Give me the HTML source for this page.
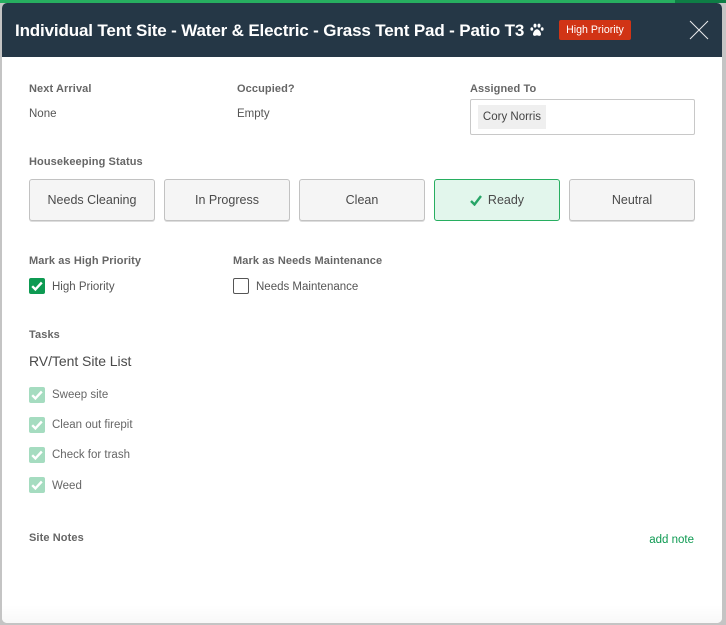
<!DOCTYPE html>
<html>
<head>
<meta charset="utf-8">
<style>
html,body{margin:0;padding:0;width:726px;height:625px;overflow:hidden;background:#c4c4c4;font-family:"Liberation Sans",sans-serif;}
.a{position:absolute;white-space:nowrap;}
#bar{left:0;top:0;width:675px;height:3px;background:#27ae60;}
#bar2{left:675px;top:0;width:51px;height:3px;background:#0e7d45;}
#modal{left:2px;top:3px;width:720px;height:620px;background:#fff;border-radius:5px;overflow:hidden;}
#grad{left:2px;top:605px;width:720px;height:18px;background:linear-gradient(#fff,#f8f8f8);border-radius:0 0 5px 5px;}
#head{left:2px;top:3px;width:720px;height:54px;background:#253746;border-radius:5px 5px 0 0;}
.title{left:15px;top:21px;font-size:17px;line-height:20px;font-weight:bold;color:#fff;letter-spacing:-.15px;}
.badge{left:559px;top:20px;width:72px;height:20px;background:#d13415;border-radius:2px;color:#fff;font-size:10.6px;line-height:20px;text-align:center;}
.lab{font-size:11px;line-height:14px;font-weight:bold;color:#666;letter-spacing:.1px;}
.val{font-size:11.5px;line-height:14px;color:#555;}
.input{left:470px;top:99px;width:223px;height:34px;border:1px solid #c8c8c8;border-radius:2px;background:#fff;}
.chip{left:478px;top:105px;width:68px;height:24px;background:#efefef;color:#444;font-size:11.5px;line-height:24px;text-align:center;}
.btn{top:179px;width:124px;height:40px;border:1px solid #c2c2c2;border-radius:3px;background:#f5f5f5;color:#4a4a4a;font-size:12.5px;line-height:40px;text-align:center;box-shadow:0 1px 0 #ddd;}
.sel{background:#e2f6ec;border-color:#27ae60;box-shadow:none;}
.cb{width:16px;height:16px;border-radius:2px;}
.cb svg{display:block;}
.tk{font-size:11.5px;line-height:14px;color:#666;left:52px;}
</style>
</head>
<body>
<div class="a" id="bar"></div>
<div class="a" id="bar2"></div>
<div class="a" id="modal"></div>
<div class="a" id="grad"></div>
<div class="a" id="head"></div>
<div class="a title">Individual Tent Site - Water &amp; Electric - Grass Tent Pad - Patio T3</div>
<svg class="a" style="left:530px;top:23px" width="14" height="14" viewBox="0 0 14 14"><g fill="#fff"><ellipse cx="1.8" cy="6" rx="1.4" ry="1.8"/><ellipse cx="5" cy="2.6" rx="1.5" ry="2"/><ellipse cx="9" cy="2.6" rx="1.5" ry="2"/><ellipse cx="12.2" cy="6" rx="1.4" ry="1.8"/><path d="M7 6.2c-2 0-4 3-4 5 0 1.6 1.5 1.8 2.4 1.5.6-.2 1-.3 1.6-.3s1 .1 1.6.3c.9.3 2.4.1 2.4-1.5 0-2-2-5-4-5z"/></g></svg>
<div class="a badge">High Priority</div>
<svg class="a" style="left:689px;top:20px" width="20" height="20" viewBox="0 0 20 20"><path d="M1 1L19 19M19 1L1 19" stroke="#fff" stroke-width="1" fill="none" opacity=".9"/></svg>

<div class="a lab" style="left:29px;top:82px">Next Arrival</div>
<div class="a val" style="left:29px;top:107px">None</div>
<div class="a lab" style="left:237px;top:82px">Occupied?</div>
<div class="a val" style="left:237px;top:107px">Empty</div>
<div class="a lab" style="left:470px;top:82px">Assigned To</div>
<div class="a input"></div>
<div class="a chip">Cory Norris</div>

<div class="a lab" style="left:29px;top:155px">Housekeeping Status</div>
<div class="a btn" style="left:29px">Needs Cleaning</div>
<div class="a btn" style="left:164px">In Progress</div>
<div class="a btn" style="left:299px">Clean</div>
<div class="a btn sel" style="left:434px"><svg style="vertical-align:-2px;margin-right:6px" width="12" height="11" viewBox="0 0 12 11"><path d="M1 6l3.5 3.5L11 1" stroke="#27a567" stroke-width="2.4" fill="none"/></svg>Ready</div>
<div class="a btn" style="left:569px">Neutral</div>

<div class="a lab" style="left:29px;top:254px">Mark as High Priority</div>
<div class="a cb" style="left:29px;top:278px;background:#0e9a52"><svg width="16" height="16" viewBox="0 0 16 16"><path d="M3.2 8.2l3.2 3.2L12.8 4.5" stroke="#fff" stroke-width="2.4" fill="none"/></svg></div>
<div class="a val" style="left:52px;top:280px">High Priority</div>
<div class="a lab" style="left:233px;top:254px">Mark as Needs Maintenance</div>
<div class="a cb" style="left:233px;top:278px;width:14px;height:14px;border:1px solid #555;background:#fff"></div>
<div class="a val" style="left:256px;top:280px">Needs Maintenance</div>

<div class="a lab" style="left:29px;top:328px">Tasks</div>
<div class="a" style="left:29px;top:353px;font-size:14px;line-height:17px;color:#4a4a4a;letter-spacing:-.05px">RV/Tent Site List</div>

<div class="a cb" style="left:29px;top:387px;background:#a5dcc0"><svg width="16" height="16" viewBox="0 0 16 16"><path d="M3.2 8.2l3.2 3.2L12.8 4.5" stroke="#fff" stroke-width="2.4" fill="none"/></svg></div>
<div class="a tk" style="top:388px">Sweep site</div>
<div class="a cb" style="left:29px;top:417px;background:#a5dcc0"><svg width="16" height="16" viewBox="0 0 16 16"><path d="M3.2 8.2l3.2 3.2L12.8 4.5" stroke="#fff" stroke-width="2.4" fill="none"/></svg></div>
<div class="a tk" style="top:418px">Clean out firepit</div>
<div class="a cb" style="left:29px;top:447px;background:#a5dcc0"><svg width="16" height="16" viewBox="0 0 16 16"><path d="M3.2 8.2l3.2 3.2L12.8 4.5" stroke="#fff" stroke-width="2.4" fill="none"/></svg></div>
<div class="a tk" style="top:448px">Check for trash</div>
<div class="a cb" style="left:29px;top:477px;background:#a5dcc0"><svg width="16" height="16" viewBox="0 0 16 16"><path d="M3.2 8.2l3.2 3.2L12.8 4.5" stroke="#fff" stroke-width="2.4" fill="none"/></svg></div>
<div class="a tk" style="top:479px">Weed</div>

<div class="a lab" style="left:29px;top:531px">Site Notes</div>
<div class="a" style="right:32px;top:533px;font-size:11.5px;line-height:14px;color:#0e9a52">add note</div>
</body>
</html>
